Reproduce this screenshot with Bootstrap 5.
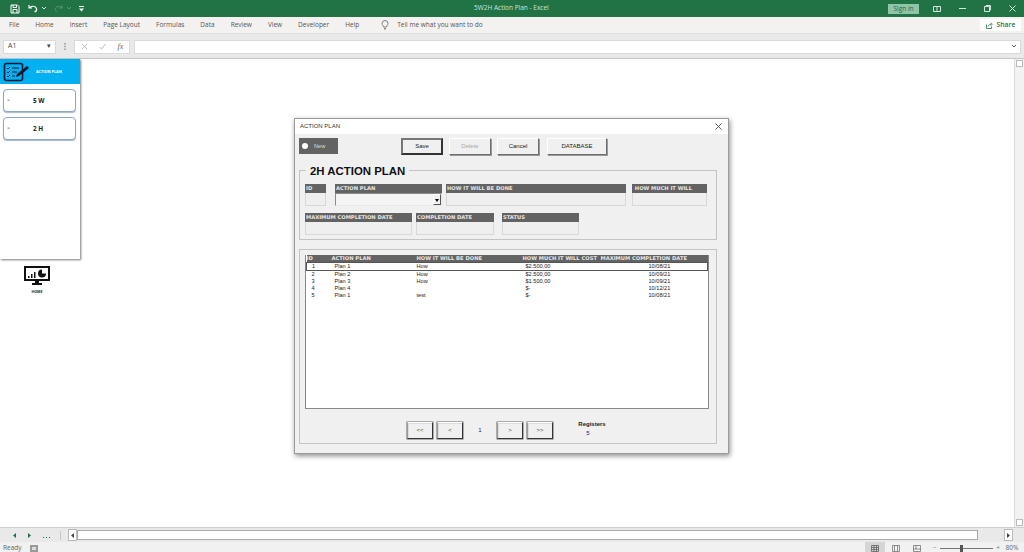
<!DOCTYPE html>
<html lang="en">
<head>
    <meta charset="UTF-8">
    <meta name="viewport" content="width=device-width, initial-scale=1.0">
    <title>5W2H Action Plan - Excel</title>
    <link href="https://cdn.jsdelivr.net/npm/bootstrap@5.3.0/dist/css/bootstrap.min.css" rel="stylesheet">
    <style>
        html, body { height: 552px; overflow: hidden; }
        body { font-family: "Open Sans", "Noto Sans", sans-serif; background: #fff; color: #444; font-size: 7px; }

        /* excel window */
        .xl-title { height: 17px; background: #217346; color: #cfe3d7; padding: 0 8px 0 10px; position: relative; }
        .xl-title-text { position: absolute; left: 474px; top: 3px; font-size: 6.5px; line-height: 10px; white-space: nowrap; }
        .xl-signin { width: 31px; height: 10px; background: #90c4a6; color: #1d6b40; font-size: 6.5px; line-height: 10px; text-align: center; }
        .xl-winbtns { gap: 10px; }
        .xl-tabs { height: 17px; background: #f3f2f1; font-size: 6.5px; color: #555; padding-left: 9px; border-bottom: 1px solid #dcdcdc; }
        .xl-bulb { margin-left: 22px; }
        .xl-share { width: 41px; height: 12px; background: #fff; color: #217346; font-size: 6.8px; font-weight: 600; margin-right: 3px; }
        .xl-formula { height: 25px; background: #e9e9e9; padding: 6px 3px 5px 3px; border-bottom: 1px solid #c6c6c6; }
        .xl-box { height: 14px; background: #fff; border: 1px solid #dadada; }
        .w-name { width: 53px; }
        .w-fx { width: 56px; }
        .fx-mark { font-family: "Liberation Serif", serif; font-size: 8px; color: #666; }
        .xl-sheet { height: 468px; background: #fff; }
        .xl-vscroll { right: 0; top: 0; bottom: 0; width: 10px; background: #f2f2f2; border-left: 1px solid #dcdcdc; }
        .xl-vbtn { left: 1px; width: 7px; height: 7px; background: #fff; border: 1px solid #bbb; }
        .xl-vbtn.at-top { top: 1px; }
        .xl-vbtn.at-bottom { bottom: 1px; }
        .xl-bottom { height: 15px; background: #e9e9e9; border-top: 1px solid #d0d0d0; }
        .bot-nav { margin-left: 13px; }
        .bot-sep { width: 1px; height: 9px; background: #c8c8c8; margin: 0 7px 0 7px; }
        .bot-arrow { width: 9px; height: 12px; background: #fff; border: 1px solid #bbb; }
        .bot-track { width: 901px; height: 10px; background: #fff; border: 1px solid #aaa; }
        .bot-arrow.ms-auto { margin-right: 11px; }
        .xl-status { height: 12px; background: #f1f1f1; font-size: 6.5px; color: #666; padding-left: 3px; }
        .stat-view { width: 20px; height: 12px; margin-right: 1px; }
        .stat-view.is-on { background: #d5d5d5; }
        .stat-zoom { width: 72px; gap: 3px; padding-left: 5px; color: #777; }
        .stat-line { flex: 1; height: 1px; background: #777; }
        .stat-thumb { left: 20px; top: -3px; width: 3px; height: 7px; background: #555; }
        .stat-pct { width: 24px; text-align: center; }

        /* sidebar shapes on the sheet */
        .side-panel { left: 0; top: 0; width: 80px; height: 200px; background: #fff; box-shadow: 1px 1px 2px #777; }
        .side-head { height: 25px; background: #00b0f0; color: #fff; font-size: 3.8px; font-weight: 700; padding-left: 3px; gap: 5px; }
        .side-btn { width: 73px; height: 23px; margin: 5px 0 0 3px; border: 1px solid #8ea9c8; border-radius: 4px; background: #fff;
            box-shadow: 0 1px 1px #a9b7c8; font-size: 6.4px; font-weight: 700; color: #222; padding: 0 3px; position: relative; }
        .side-caret { font-size: 5px; font-weight: 400; }
        .side-btn-text { position: absolute; left: 29px; }
        .side-home { left: 22px; top: 207px; width: 30px; font-size: 3.6px; font-weight: 700; color: #222; }

        /* userform */
        .vba-form { left: 294px; top: 59px; width: 435px; height: 336px; background: #f0f0f0; border: 1px solid #9a9a9a;
            box-shadow: 1px 2px 5px rgba(0,0,0,.45); font-family: "Liberation Sans", sans-serif; font-size: 6px; color: #222; }
        .vba-caption { height: 15px; background: #fff; padding: 0 6px 0 5px; font-size: 6px; color: #333; }
        .vba-toolbar { height: 21px; margin: 4px 0 0 4px; }
        .vba-toggle { width: 39px; height: 16px; background: #636363; color: #ddd; padding-left: 3px; gap: 6px; font-size: 5.6px; }
        .vba-dot { width: 6px; height: 6px; border-radius: 50%; background: #fff; }
        .vba-btn { height: 17px; background: #f0f0f0; border: 1px solid; border-color: #fff #6e6e6e #6e6e6e #fff; box-shadow: 1px 1px 0 #999; font-size: 6px; color: #222; }
        .vba-btn.is-default { border: 2px solid; border-color: #777 #333 #333 #777; box-shadow: none; }
        .vba-btn.is-off { color: #a8a8a8; }
        .w-save { width: 42px; margin-left: 63px; }
        .w-del { width: 42px; margin-left: 6px; }
        .w-can { width: 42px; margin-left: 6px; }
        .w-db { width: 60px; margin-left: 8px; }

        .vba-frame { position: relative; margin: 11px 11px 0 4px; border: 1px solid #c4c4c4; height: 70px; padding: 13px 0 0 5px; }
        .vba-legend { position: absolute; left: 6px; top: -7px; background: #f0f0f0; padding: 0 4px; font-size: 11.4px; line-height: 14px; font-weight: 700; color: #111; font-family: "Liberation Sans", sans-serif; }
        .vba-fields { gap: 7px; margin-bottom: 7px; }
        .vba-label { height: 9px; background: #636363; color: #e6e6e6; font-family: "DejaVu Sans", sans-serif; font-size: 5.2px; line-height: 9px; font-weight: 700; padding-left: 1px; white-space: nowrap; overflow: hidden; }
        .vba-input { height: 13px; background: #efefef; border: 1px solid #d8d8d8; border-top: 0; position: relative; }
        .vba-input.is-combo { border: 1px solid; border-color: #8a8a8a #e8e8e8 #e8e8e8 #8a8a8a; background: #f4f4f4; }
        .vba-drop { right: 0; top: 0; width: 8px; height: 11px; background: #f0f0f0; border: 1px solid; border-color: #fff #555 #555 #fff; }
        .vba-drop::after { content: ""; position: absolute; left: 1px; top: 4px; border: 2px solid transparent; border-top: 3px solid #000; }
        .f-id { width: 21px; }
        .f-plan { width: 107px; margin-left: 2px; }
        .f-how { width: 180px; margin-left: -3px; }
        .f-much { width: 75px; margin-left: -1px; }
        .f-max { width: 107px; }
        .f-comp { width: 78px; margin-left: -3px; }
        .f-stat { width: 77px; margin-left: 1px; }

        .vba-frame2 { margin: 9px 11px 0 4px; border: 1px solid #c4c4c4; height: 195px; padding: 5px 7px 0 5px; }
        .vba-list { height: 154px; background: #fff; border: 1px solid #888; border-top: 0; }
        .vba-grid { table-layout: fixed; width: 100%; border-collapse: collapse; font-size: 5.6px; color: #222; }
        .vba-grid th { height: 7px; padding: 0; background: #636363; color: #e6e6e6; font-family: "DejaVu Sans", sans-serif; font-size: 5.2px; font-weight: 700; line-height: 7px; white-space: nowrap; }
        .vba-grid td { height: 7px; padding: 0; line-height: 7px; white-space: nowrap; }
        .vba-grid tr.is-selected td { border-top: 1px solid #555; border-bottom: 1px solid #555; }
        .vba-grid tr.is-selected td:first-child { border-left: 1px solid #555; }
        .vba-grid tr.is-selected td:last-child { border-right: 1px solid #555; }
        .c-id { width: 25px; }
        .c-plan { width: 85px; }
        .c-how { width: 106px; }
        .c-cost { width: 78px; }
        .pad-id { padding-left: 5px !important; }
        .pad-plan { padding-left: 3px !important; }
        .pad-cost { padding-left: 3px !important; }
        .pad-date { padding-left: 48px !important; }

        .vba-pager { margin-top: 12px; height: 18px; padding-left: 102px; }
        .vba-pgbtn { width: 26px; height: 17px; background: #f0f0f0; border: 1px solid; border-color: #fff #333 #333 #999; box-shadow: inset 1px 1px 0 #ddd, 0 0 0 .5px #666; font-size: 6px; color: #444; }
        .vba-pageno { width: 34px; text-align: center; color: #1a1a8c; font-size: 6px; }
        .vba-reg { left: 272px; top: -1px; width: 30px; text-align: center; font-size: 6px; }
        .vba-reg-n { color: #1a1a8c; padding-right: 8px; }
    </style>
</head>
<body>
    <div class="xl-title d-flex align-items-center">
        <svg width="10" height="10" viewBox="0 0 10 10" fill="none" stroke="#fff"><path d="M1 1h6.500L9 2.500V9H1zM3 1v2.500h3.500V1M3 9V5.500h4V9"/></svg>
        <svg class="ms-2" width="10" height="9" viewBox="0 0 10 9" fill="none" stroke="#fff" stroke-width="1.2"><path d="M1 1v3h3M1.200 4C3 1.600 7.500 1.600 8.500 4.500c.3 1.500-.5 3-2 3.500"/></svg>
        <svg class="ms-1" width="4" height="3" viewBox="0 0 4 3" fill="none" stroke="#cfe3d7"><path d="M0 0l2 2 2-2"/></svg>
        <svg class="ms-2" width="9" height="9" viewBox="0 0 10 9" fill="none" stroke="#5d9c79"><path d="M9 1v3H6M8.800 4C7 1.600 2.500 1.600 1.500 4.500c-.3 1.500.5 3 2 3.500"/></svg>
        <svg class="ms-1" width="4" height="3" viewBox="0 0 4 3" fill="none" stroke="#5d9c79"><path d="M0 0l2 2 2-2"/></svg>
        <svg class="ms-2" width="5" height="6" viewBox="0 0 5 6" fill="#fff"><path d="M0 0h5v1H0zM0 2.500h5L2.500 5.500z"/></svg>
        <span class="xl-title-text">5W2H Action Plan - Excel</span>
        <div class="ms-auto d-flex align-items-center xl-winbtns">
            <div class="xl-signin me-1">Sign in</div>
            <svg width="8" height="6" viewBox="0 0 8 6" fill="none" stroke="#d5e6dc"><path d="M.5.500h7v5h-7zM4 .5v5"/></svg>
            <svg class="ms-2" width="7" height="1" viewBox="0 0 7 1"><path d="M0 0h7v1H0z" fill="#d5e6dc"/></svg>
            <svg class="ms-2" width="7" height="7" viewBox="0 0 7 7" fill="none" stroke="#d5e6dc"><path d="M.5 1.500h5v5h-5zM2 1.500V.5h4.500V5h-1"/></svg>
            <svg class="ms-2" width="7" height="7" viewBox="0 0 7 7" fill="none" stroke="#d5e6dc"><path d="M.5.500l6 6M6.500.500l-6 6"/></svg>
        </div>
    </div>

    <div class="xl-tabs d-flex align-items-center">
        <span>File</span>
        <span class="ms-3">Home</span>
        <span class="ms-3">Insert</span>
        <span class="ms-3">Page Layout</span>
        <span class="ms-3">Formulas</span>
        <span class="ms-3">Data</span>
        <span class="ms-3">Review</span>
        <span class="ms-3">View</span>
        <span class="ms-3">Developer</span>
        <span class="ms-3">Help</span>
        <svg class="xl-bulb" width="8" height="10" viewBox="0 0 8 10" fill="none" stroke="#666" stroke-width=".8"><path d="M2.500 7C2.400 5.500 1 5 1 3.500a3 3 0 016 0C7 5 5.600 5.500 5.500 7zM3 8.500h2M3.500 9.600h1"/></svg>
        <span class="ms-2">Tell me what you want to do</span>
        <div class="xl-share ms-auto d-flex align-items-center justify-content-center gap-1">
            <svg width="7" height="7" viewBox="0 0 7 7" fill="none" stroke="#217346" stroke-width=".8"><path d="M.5 2.500v4h5v-2M2 4.500C2.500 3 3.500 2.300 5 2.300M4.500.8L6.300 2.300 4.500 3.800"/></svg>
            Share
        </div>
    </div>

    <div class="xl-formula d-flex align-items-center">
        <div class="xl-box d-flex align-items-center px-1 w-name">A1<span class="ms-auto">▾</span></div>
        <svg class="mx-2" width="2" height="7" viewBox="0 0 2 7" fill="#aaa"><path d="M0 0h2v1.500H0zM0 2.700h2v1.500H0zM0 5.400h2V7H0z"/></svg>
        <div class="xl-box d-flex align-items-center justify-content-around w-fx">
            <svg width="7" height="7" viewBox="0 0 7 7" stroke="#bbb"><path d="M1 1l5 5M6 1L1 6"/></svg>
            <svg width="7" height="7" viewBox="0 0 7 7" fill="none" stroke="#bbb"><path d="M.5 4l2 2L6.500 1"/></svg>
            <i class="fx-mark">fx</i>
        </div>
        <div class="xl-box flex-grow-1 ms-1 d-flex align-items-center justify-content-end pe-1">
            <svg width="4" height="3" viewBox="0 0 4 3" fill="none" stroke="#555"><path d="M0 0l2 2 2-2"/></svg>
        </div>
    </div>

    <div class="xl-sheet position-relative">
        <div class="xl-vscroll position-absolute">
            <div class="xl-vbtn at-top position-absolute"></div>
            <div class="xl-vbtn at-bottom position-absolute"></div>
        </div>

        <div class="side-panel position-absolute">
            <div class="side-head d-flex align-items-center">
                <svg width="28" height="20" viewBox="0 0 28 20" fill="none" stroke="#0b1730" stroke-width="1.600">
                    <rect x="1.500" y="1.500" width="18" height="17" rx="2"/>
                    <path d="M4 6l1 1 2-2M9 6h7M4 10l1 1 2-2M9 10h5M4 14l1 1 2-2M9 14h3" stroke-width="1"/>
                    <path d="M13 15l1-3L24 4l2 2-10 8z" fill="#0b1730" stroke="none"/>
                </svg>
                <span>ACTION PLAN</span>
            </div>
            <div class="side-btn d-flex align-items-center"><span class="side-caret">&gt;</span><span class="side-btn-text">5 W</span></div>
            <div class="side-btn d-flex align-items-center"><span class="side-caret">&gt;</span><span class="side-btn-text">2 H</span></div>
        </div>

        <div class="side-home position-absolute text-center">
            <svg class="d-block mx-auto mb-1" width="26" height="19" viewBox="0 0 26 19">
                <path d="M0 0h26v15H15v2h3v2H8v-2h3v-2H0zM2 2v11h22V2z" fill="#111"/>
                <path d="M4 12v-2h1.500v2zM7 12V8h1.500v4zM10 12V6h1.500v6z" fill="#111"/>
                <path d="M18 3.500a4 4 0 104 4h-4z" fill="#111"/>
            </svg>
            HOME
        </div>

        <div class="vba-form position-absolute">
            <div class="vba-caption d-flex align-items-center justify-content-between">
                <span>ACTION PLAN</span>
                <svg width="7" height="7" viewBox="0 0 7 7" stroke="#333" stroke-width=".8"><path d="M.5.500l6 6M6.500.500l-6 6"/></svg>
            </div>
            <div class="vba-toolbar d-flex align-items-start">
                <div class="vba-toggle d-flex align-items-center"><span class="vba-dot"></span><span>New</span></div>
                <button class="vba-btn is-default w-save p-0">Save</button>
                <button class="vba-btn is-off w-del p-0">Delete</button>
                <button class="vba-btn w-can p-0">Cancel</button>
                <button class="vba-btn w-db p-0">DATABASE</button>
            </div>

            <div class="vba-frame">
                <div class="vba-legend">2H ACTION PLAN</div>
                <div class="vba-fields d-flex">
                    <div class="f-id"><div class="vba-label">ID</div><div class="vba-input"></div></div>
                    <div class="f-plan"><div class="vba-label">ACTION PLAN</div><div class="vba-input is-combo"><span class="vba-drop position-absolute"></span></div></div>
                    <div class="f-how"><div class="vba-label">HOW IT WILL BE DONE</div><div class="vba-input"></div></div>
                    <div class="f-much"><div class="vba-label">&nbsp;HOW MUCH IT WILL</div><div class="vba-input"></div></div>
                </div>
                <div class="vba-fields d-flex">
                    <div class="f-max"><div class="vba-label">MAXIMUM COMPLETION DATE</div><div class="vba-input"></div></div>
                    <div class="f-comp"><div class="vba-label">COMPLETION DATE</div><div class="vba-input"></div></div>
                    <div class="f-stat"><div class="vba-label">STATUS</div><div class="vba-input"></div></div>
                </div>
            </div>

            <div class="vba-frame2 position-relative">
                <div class="vba-list">
                    <table class="vba-grid">
                        <thead>
                            <tr><th class="c-id">ID</th><th class="c-plan">ACTION PLAN</th><th class="c-how">HOW IT WILL BE DONE</th><th class="c-cost">HOW MUCH IT WILL COST</th><th>MAXIMUM COMPLETION DATE</th></tr>
                        </thead>
                        <tbody id="plan-rows"></tbody>
                    </table>
                </div>
                <div class="vba-pager d-flex align-items-center position-relative">
                    <button class="vba-pgbtn p-0">&lt;&lt;</button>
                    <button class="vba-pgbtn p-0 ms-1">&lt;</button>
                    <span class="vba-pageno">1</span>
                    <button class="vba-pgbtn p-0">&gt;</button>
                    <button class="vba-pgbtn p-0 ms-1">&gt;&gt;</button>
                    <div class="vba-reg position-absolute"><div class="fw-bold">Registers</div><div class="vba-reg-n">5</div></div>
                </div>
            </div>
        </div>
    </div>

    <div class="xl-bottom d-flex align-items-center position-relative">
        <svg class="bot-nav" width="40" height="5" viewBox="0 0 40 5" fill="#217346"><path d="M3 0v5L0 2.500zM15 0v5l3-2.500zM30 4h1v1h-1zM33 4h1v1h-1zM36 4h1v1h-1z"/></svg>
        <span class="bot-sep"></span>
        <div class="bot-arrow d-flex align-items-center justify-content-center"><svg width="3" height="5" viewBox="0 0 3 5" fill="#444"><path d="M3 0v5L0 2.500z"/></svg></div>
        <div class="bot-track"></div>
        <div class="bot-arrow ms-auto d-flex align-items-center justify-content-center"><svg width="3" height="5" viewBox="0 0 3 5" fill="#444"><path d="M0 0v5l3-2.500z"/></svg></div>
    </div>

    <div class="xl-status d-flex align-items-center">
        <span>Ready</span>
        <svg class="ms-2" width="8" height="7" viewBox="0 0 8 7"><path d="M0 0h8v7H0z" fill="#9a9a9a"/><path d="M2 2h4v3H2z" fill="#ddd"/></svg>
        <div class="ms-auto d-flex align-items-center h-100">
            <div class="stat-view is-on d-flex align-items-center justify-content-center"><svg width="8" height="7" viewBox="0 0 8 7" fill="none" stroke="#555" stroke-width=".7"><path d="M.5.500h7v6h-7zM3 .5v6M5.500.5v6M.5 2.500h7M.5 4.500h7"/></svg></div>
            <div class="stat-view d-flex align-items-center justify-content-center"><svg width="8" height="7" viewBox="0 0 8 7" fill="none" stroke="#666" stroke-width=".7"><path d="M.5.500h7v6h-7zM2.500.5v6M5.500.5v6"/></svg></div>
            <div class="stat-view d-flex align-items-center justify-content-center"><svg width="8" height="7" viewBox="0 0 8 7" fill="none" stroke="#666" stroke-width=".7"><path d="M.5.500h7v6h-7zM.5 4h7M3 .5v3.500"/></svg></div>
            <div class="stat-zoom d-flex align-items-center">
                <span>−</span><span class="stat-line position-relative"><span class="stat-thumb position-absolute"></span></span><span>+</span>
            </div>
            <span class="stat-pct">80%</span>
        </div>
    </div>

    <script src="https://cdn.jsdelivr.net/npm/bootstrap@5.3.0/dist/js/bootstrap.bundle.min.js"></script>
    <script>
        const plans = [
            ['1', 'Plan 1', 'How', '$2.500,00', '10/08/21'],
            ['2', 'Plan 2', 'How', '$2.500,00', '10/09/21'],
            ['3', 'Plan 3', 'How', '$1.500,00', '10/09/21'],
            ['4', 'Plan 4', '', '$-', '10/12/21'],
            ['5', 'Plan 1', 'test', '$-', '10/08/21']
        ];
        const rows = document.getElementById('plan-rows');
        plans.forEach((p, i) => {
            const tr = document.createElement('tr');
            if (i === 0) tr.classList.add('is-selected');
            tr.innerHTML = `<td class="pad-id">${p[0]}</td><td class="pad-plan">${p[1]}</td><td>${p[2]}</td><td class="pad-cost">${p[3]}</td><td class="pad-date">${p[4]}</td>`;
            rows.appendChild(tr);
        });
    </script>
</body>
</html>
